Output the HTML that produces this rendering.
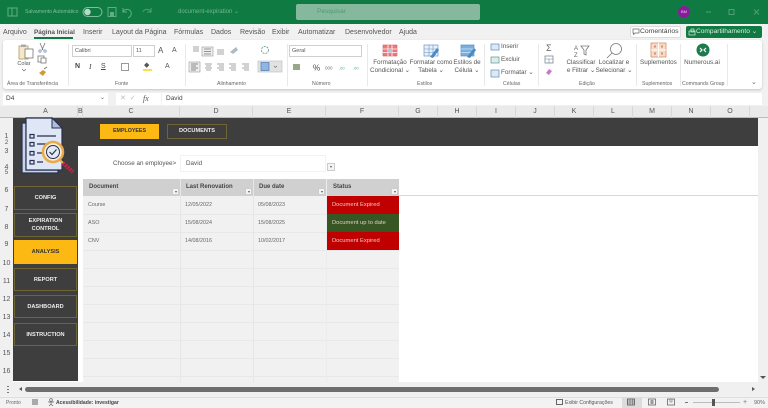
<!DOCTYPE html>
<html><head><meta charset="utf-8">
<style>
html,body{margin:0;padding:0;width:768px;height:408px;overflow:hidden;background:#f1f1f1;font-family:"Liberation Sans",sans-serif;}
.a{position:absolute;white-space:nowrap;}
.t{position:absolute;white-space:nowrap;color:#555;font-size:6.3px;line-height:8px;}
.c{text-align:center;}
.tab{position:absolute;top:28px;font-size:7px;line-height:9px;color:#555;white-space:nowrap;}
.gl{position:absolute;top:81px;font-size:5.2px;line-height:7px;color:#666;white-space:nowrap;}
.sep{position:absolute;top:44px;width:1px;height:42px;background:#e8e8e8;}
.box{position:absolute;background:#fff;border:1px solid #cfcfcf;box-sizing:border-box;}
.ch{position:absolute;top:106px;height:12px;font-size:7px;line-height:12px;text-align:center;color:#555;border-right:1px solid #d8d8d8;box-sizing:border-box;}
.rh{position:absolute;left:0;width:13px;text-align:center;font-size:7px;color:#555;line-height:8px;box-sizing:border-box;}
.nav{position:absolute;left:14px;width:63px;background:#3e3e3e;border:1px solid #6e6434;box-sizing:border-box;color:#eee;font-size:5.6px;font-weight:bold;text-align:center;display:flex;align-items:center;justify-content:center;line-height:8px;}
.hd{position:absolute;top:179px;height:17px;background:#d0d0d0;color:#444;font-size:6px;font-weight:bold;line-height:17px;padding-left:6px;box-sizing:border-box;}
.fb{position:absolute;top:188px;width:7px;height:7px;background:#f4f4f4;border:1px solid #ccc;box-sizing:border-box;}
.fb:after{content:"";position:absolute;left:1.5px;top:2px;border-left:1.5px solid transparent;border-right:1.5px solid transparent;border-top:2px solid #555;}
.cell{position:absolute;font-size:5.4px;color:#666;line-height:18px;}
.st{position:absolute;left:327px;width:72px;height:18px;font-size:5.8px;line-height:18px;color:#e0cdc5;padding-left:5px;box-sizing:border-box;}
</style></head>
<body>
<!-- title bar -->
<div class="a" style="left:0;top:0;width:768px;height:24px;background:#107a43;"></div>
<svg class="a" style="left:0;top:0" width="768" height="24">
<rect x="8" y="8" width="9" height="8" fill="none" stroke="#5fae86" stroke-width="1"/><line x1="12" y1="8" x2="12" y2="16" stroke="#5fae86"/>
<rect x="83" y="7.5" width="19" height="9" rx="4.5" fill="none" stroke="#7fbf9e"/><circle cx="87.500" cy="12" r="3.2" fill="#b8dbc9"/>
<rect x="108" y="7.500" width="8" height="9" fill="none" stroke="#5fae86"/><rect x="110" y="12" width="4" height="4" fill="#5fae86"/>
<path d="M123 12c2-4 7-3 8 0s-1 5-3 6M123 8v4h4" fill="none" stroke="#5fae86"/><path d="M151 12c-2-4-7-3-8 0M151 8v4h-4" fill="none" stroke="#4f9f78"/>
<circle cx="307" cy="11" r="2.200" fill="none" stroke="#4f9a75"/><path d="M305.500 12.500l-2 2.500" stroke="#4f9a75"/>
<circle cx="684" cy="12" r="6" fill="#8a1c9c"/>
<line x1="706" y1="12" x2="711" y2="12" stroke="#4f9f78"/><rect x="729" y="9.500" width="5" height="5" fill="none" stroke="#4f9f78"/>
<path d="M754 9.500l5 5M759 9.500l-5 5" stroke="#4f9f78"/>
</svg>
<div class="a" style="left:25px;top:8px;font-size:5.1px;line-height:8px;color:#7fbf9e;">Salvamento Automático</div>
<div class="a" style="left:178px;top:8px;font-size:6px;line-height:8px;color:#6fb792;">document-expiration ⌄</div>
<div class="a" style="left:296px;top:4px;width:184px;height:16px;background:#85b89c;border-radius:2px;"></div>
<div class="a" style="left:317px;top:8px;font-size:6.5px;line-height:8px;color:#4f9a75;">Pesquisar</div>
<div class="a" style="left:679px;top:9px;width:10px;font-size:4px;line-height:6px;text-align:center;color:#e8c8ee;">BM</div>
<!-- tabs -->
<div class="tab" style="left:3px">Arquivo</div>
<div class="tab" style="left:34px;font-weight:bold;font-size:6.4px">Página Inicial</div>
<div class="a" style="left:34px;top:37px;width:39px;height:1.500px;background:#107a43;"></div>
<div class="tab" style="left:83px">Inserir</div>
<div class="tab" style="left:112px">Layout da Página</div>
<div class="tab" style="left:174px">Fórmulas</div>
<div class="tab" style="left:211px">Dados</div>
<div class="tab" style="left:240px">Revisão</div>
<div class="tab" style="left:272px">Exibir</div>
<div class="tab" style="left:298px">Automatizar</div>
<div class="tab" style="left:345px">Desenvolvedor</div>
<div class="tab" style="left:399px">Ajuda</div>
<div class="a" style="left:630px;top:26px;width:51px;height:12px;background:#fff;border:1px solid #dcdcdc;box-sizing:border-box;border-radius:2px;font-size:6.8px;line-height:10px;color:#444;padding-left:9px;">Comentários</div>
<svg class="a" style="left:632px;top:28px" width="8" height="8"><path d="M1 1h6v4H3L1.500 6.500V5H1z" fill="none" stroke="#666" stroke-width=".7"/></svg>
<div class="a" style="left:686px;top:26px;width:76px;height:12px;background:#107a43;border-radius:2px;font-size:6.6px;line-height:12px;color:#d8eee2;padding-left:10px;box-sizing:border-box;">Compartilhamento ⌄</div>
<svg class="a" style="left:688px;top:28px" width="8" height="8"><rect x="1" y="3" width="6" height="4" fill="none" stroke="#d8eee2" stroke-width=".7"/><rect x="3" y="1" width="3" height="3" fill="none" stroke="#d8eee2" stroke-width=".7"/></svg>
<!-- ribbon -->
<div class="a" style="left:3px;top:40px;width:759px;height:49px;background:#fff;border-radius:3px;box-shadow:0 1px 2px #c4c4c4;"></div>
<div class="sep" style="left:68px"></div><div class="sep" style="left:185px"></div><div class="sep" style="left:287px"></div><div class="sep" style="left:367px"></div><div class="sep" style="left:484px"></div><div class="sep" style="left:538px"></div><div class="sep" style="left:636px"></div><div class="sep" style="left:680px"></div><div class="sep" style="left:727px"></div>
<svg class="a" style="left:0;top:40px" width="768" height="42">
<!-- clipboard -->
<rect x="19" y="6" width="9" height="13" fill="#f5e8c8" stroke="#b09a68" stroke-width=".8"/><rect x="25" y="9" width="8" height="9" fill="#fff" stroke="#777" stroke-width=".8"/><rect x="21" y="4.500" width="5" height="2.500" fill="#aaa"/>
<path d="M40 3l3 7M45 3l-3 7" stroke="#777" stroke-width=".8" fill="none"/><circle cx="40" cy="11" r="1.200" fill="none" stroke="#5b7fc0" stroke-width=".7"/><circle cx="45" cy="11" r="1.200" fill="none" stroke="#5b7fc0" stroke-width=".7"/>
<rect x="38" y="16" width="6" height="6" fill="#fff" stroke="#777" stroke-width=".8"/><rect x="41" y="18" width="5" height="5" fill="#fff" stroke="#777" stroke-width=".8"/>
<path d="M39 33l4-3 3 2-3 4z" fill="#d49a30"/><path d="M44 29l3-2" stroke="#777"/>
<path d="M22 26l2 2 2-2" fill="none" stroke="#666" stroke-width=".6" transform="translate(0 3)"/>
<!-- align icons -->
<path d="M193 7h6M193 9h6M193 11h6" stroke="#888" stroke-width=".7"/><rect x="202" y="7" width="11" height="9" fill="#eee" stroke="#999" stroke-width=".6"/><path d="M204 9h7M204 11.500h7M204 14h7" stroke="#777" stroke-width=".7"/><path d="M217 10h7M217 12h7M217 14h7" stroke="#888" stroke-width=".7"/>
<path d="M230 12l6-5 2 3-5 4z" fill="#9ab" opacity=".8"/>
<rect x="189" y="22" width="11" height="10" fill="#eee" stroke="#999" stroke-width=".6"/><path d="M191 24h7M191 26h5M191 28h7M191 30h5" stroke="#666" stroke-width=".7"/>
<path d="M205 24h7M206 26h5M205 28h7M206 30h5M217 24h7M219 26h5M217 28h7M219 30h5M229 24h7M231 26h5M229 28h7M231 30h5M242 24h7M244 26h5M242 28h7M244 30h5" stroke="#888" stroke-width=".7"/>
<circle cx="265" cy="10" r="3.500" fill="none" stroke="#7a9" stroke-width="1" stroke-dasharray="2 1"/>
<rect x="258" y="21" width="24" height="11" fill="#e2e2e2" stroke="#bbb" stroke-width=".6"/><rect x="261" y="22.500" width="8" height="8" fill="#8fb6e0" stroke="#4a7ab5" stroke-width=".7"/>
<path d="M274 26l1.500 1.500 1.500-1.500" fill="none" stroke="#666" stroke-width=".6"/>
<!-- number -->
<rect x="293" y="24" width="7" height="6" fill="#9aa88a"/><text x="313" y="30.500" font-size="8" fill="#444" font-family="Liberation Sans">%</text><text x="325" y="29.500" font-size="4.500" fill="#777" font-family="Liberation Sans">000</text><text x="339" y="29.500" font-size="4" fill="#5a7" font-family="Liberation Sans">,00</text><text x="353" y="29.500" font-size="4" fill="#5a7" font-family="Liberation Sans">,00</text>
<!-- cond format -->
<rect x="383" y="5" width="14" height="11" fill="#e77" stroke="#c66" stroke-width=".6"/><path d="M383 9h14M383 12.500h14M388 5v11M392 5v11" stroke="#fff" stroke-width=".8"/><rect x="388" y="9" width="4" height="3.500" fill="#aac8e8"/>
<rect x="424" y="5" width="14" height="11" fill="#e8f0f8" stroke="#6a97c8" stroke-width=".7"/><path d="M424 9h14M424 12.500h14M429 5v11M433 5v11" stroke="#6a97c8" stroke-width=".6"/><path d="M430 17l7-9 2 2-6 8z" fill="#4a8ac0"/>
<rect x="461" y="5" width="13" height="11" fill="#7ab0e0" stroke="#5a90c0" stroke-width=".7"/><path d="M461 9h13M461 12.500h13" stroke="#fff" stroke-width=".6"/><path d="M467 17l7-9 2 2-6 8z" fill="#4a8ac0"/>
<!-- cells -->
<rect x="491" y="4" width="8" height="6" fill="#dfe9f4" stroke="#5a8abc" stroke-width=".7"/><rect x="491" y="17" width="8" height="6" fill="#dfe9f4" stroke="#5a9a7c" stroke-width=".7"/><rect x="491" y="30" width="8" height="7" fill="#dfe9f4" stroke="#5a8abc" stroke-width=".7"/>
<!-- edit -->
<text x="546" y="11" font-size="9" fill="#666" font-family="Liberation Sans">Σ</text><rect x="545" y="16" width="8" height="7" fill="#fff" stroke="#777" stroke-width=".7"/><path d="M545 19h8M549 19v4" stroke="#5a8abc" stroke-width=".6"/><path d="M546 33l3-4 3 2-3 4z" fill="#c77bc7"/>
<text x="574" y="10" font-size="6" fill="#666" font-family="Liberation Sans">A</text><text x="574" y="17" font-size="6" fill="#666" font-family="Liberation Sans">Z</text><path d="M581 6h8l-3 4v5l-2-1v-4z" fill="none" stroke="#777" stroke-width=".8"/>
<circle cx="616" cy="9" r="5.500" fill="none" stroke="#777" stroke-width=".8"/><path d="M612 13l-5 5" stroke="#777" stroke-width=".8"/>
<!-- add-ins -->
<rect x="651" y="3" width="15" height="14" fill="#f6dcc8" stroke="#d8916a" stroke-width=".8"/><path d="M651 10h15M658.500 3v14" stroke="#fff" stroke-width="1"/><rect x="654" y="5.500" width="2" height="2" fill="#d8916a"/><rect x="661" y="5.500" width="2" height="2" fill="#d8916a"/><rect x="654" y="12.500" width="2" height="2" fill="#d8916a"/><rect x="661" y="12.500" width="2" height="2" fill="#d8916a"/>
<circle cx="703" cy="10" r="6.500" fill="#1e7b4e"/><path d="M700 8l2 2-2 2M706 8l-2 2 2 2" stroke="#fff" stroke-width="1.200" fill="none"/>
</svg>
<div class="t c" style="left:15px;top:60px;width:18px;font-size:5.5px;">Colar</div>
<div class="gl" style="left:7px">Área de Transferência</div>
<div class="gl" style="left:115px">Fonte</div>
<div class="gl" style="left:217px">Alinhamento</div>
<div class="gl" style="left:312px">Número</div>
<div class="gl" style="left:417px">Estilos</div>
<div class="gl" style="left:503px">Células</div>
<div class="gl" style="left:579px">Edição</div>
<div class="gl" style="left:642px">Suplementos</div>
<div class="gl" style="left:682px">Commands Group</div>
<div class="box" style="left:72px;top:45px;width:60px;height:12px;font-size:5.5px;line-height:10px;padding-left:2px;color:#555;">Calibri</div>
<div class="box" style="left:133px;top:45px;width:22px;height:12px;font-size:5.500px;line-height:10px;padding-left:2px;color:#555;">11</div>
<div class="a" style="left:158px;top:46px;font-size:8px;line-height:9px;color:#555;">A</div>
<div class="a" style="left:172px;top:47px;font-size:7px;line-height:8px;color:#555;">A</div>
<div class="a" style="left:75px;top:62px;font-size:7px;line-height:9px;color:#444;font-weight:bold;">N</div>
<div class="a" style="left:89px;top:62px;font-size:7.500px;line-height:9px;color:#444;font-style:italic;font-family:'Liberation Serif',serif;">I</div>
<div class="a" style="left:101px;top:62px;font-size:7px;line-height:9px;color:#444;text-decoration:underline;">S</div>
<div class="a" style="left:121px;top:63px;width:8px;height:8px;border:1px solid #999;box-sizing:border-box;"></div>
<div class="a" style="left:144px;top:62px;font-size:7px;line-height:7px;color:#555;">◆</div>
<div class="a" style="left:143px;top:69px;width:9px;height:2px;background:#f7e24a;"></div>
<div class="a" style="left:165px;top:62px;font-size:7px;line-height:9px;color:#555;">A</div>
<div class="box" style="left:289px;top:45px;width:73px;height:12px;font-size:5.5px;line-height:10px;padding-left:2px;color:#555;">Geral</div>
<div class="t c" style="left:368px;top:59px;width:44px;">Formatação<br>Condicional ⌄</div>
<div class="t c" style="left:409px;top:59px;width:44px;">Formatar como<br>Tabela ⌄</div>
<div class="t c" style="left:450px;top:59px;width:34px;">Estilos de<br>Célula ⌄</div>
<div class="t" style="left:501px;top:43px;">Inserir</div>
<div class="t" style="left:501px;top:56px;">Excluir</div>
<div class="t" style="left:501px;top:69px;">Formatar ⌄</div>
<div class="t c" style="left:560px;top:59px;width:42px;">Classificar<br>e Filtrar ⌄</div>
<div class="t c" style="left:593px;top:59px;width:42px;">Localizar e<br>Selecionar ⌄</div>
<div class="t c" style="left:640px;top:59px;width:36px;">Suplementos</div>
<div class="t c" style="left:680px;top:59px;width:44px;">Numerous.ai</div>
<div class="a" style="left:751px;top:79px;font-size:7px;line-height:8px;color:#666;">⌄</div>
<!-- formula bar -->
<div class="a" style="left:3px;top:93px;width:105px;height:12px;background:#fff;"></div>
<div class="a" style="left:6px;top:94px;font-size:6.500px;line-height:10px;color:#444;">D4</div>
<div class="a" style="left:100px;top:94px;font-size:6px;line-height:9px;color:#666;">⌄</div>
<div class="a" style="left:116px;top:93px;width:45px;height:12px;background:#fff;"></div>
<div class="a" style="left:120px;top:94px;font-size:7px;line-height:10px;color:#bbb;">✕ &nbsp;✓</div>
<div class="a" style="left:143px;top:93px;font-size:8px;line-height:11px;color:#555;font-style:italic;font-family:'Liberation Serif',serif;">fx</div>
<div class="a" style="left:162px;top:93px;width:600px;height:12px;background:#fff;font-size:6.500px;line-height:12px;color:#444;padding-left:4px;box-sizing:border-box;">David</div>
<!-- col headers -->
<div class="a" style="left:0;top:106px;width:768px;height:12px;background:#eaeaea;border-bottom:1px solid #bbb;box-sizing:border-box;"></div>
<div class="ch" style="left:14px;width:64px">A</div>
<div class="ch" style="left:78px;width:5px;overflow:visible">B</div>
<div class="ch" style="left:83px;width:97px">C</div>
<div class="ch" style="left:180px;width:73px">D</div>
<div class="ch" style="left:253px;width:73px">E</div>
<div class="ch" style="left:326px;width:73px">F</div>
<div class="ch" style="left:399px;width:39px">G</div>
<div class="ch" style="left:438px;width:39px">H</div>
<div class="ch" style="left:477px;width:39px">I</div>
<div class="ch" style="left:516px;width:39px">J</div>
<div class="ch" style="left:555px;width:39px">K</div>
<div class="ch" style="left:594px;width:39px">L</div>
<div class="ch" style="left:633px;width:39px">M</div>
<div class="ch" style="left:672px;width:39px">N</div>
<div class="ch" style="left:711px;width:39px">O</div>
<!-- sheet -->
<div class="a" style="left:0;top:118px;width:13px;height:264px;background:#f0f0f0;"></div>
<div class="a" style="left:13px;top:118px;width:745px;height:264px;background:#fff;"></div>
<div class="a" style="left:13px;top:118px;width:745px;height:28px;background:#3e3e3e;"></div>
<div class="a" style="left:13px;top:118px;width:65px;height:263px;background:#3e3e3e;"></div>
<div class="rh" style="top:133px">1</div><div class="rh" style="top:139px;font-size:6px">2</div><div class="rh" style="top:148px">3</div>
<div class="rh" style="top:164px">4</div><div class="rh" style="top:169px;font-size:6px">5</div><div class="rh" style="top:187px">6</div>
<div class="rh" style="top:206px">7</div><div class="rh" style="top:224px">8</div><div class="rh" style="top:241px">9</div>
<div class="rh" style="top:260px">10</div><div class="rh" style="top:278px">11</div><div class="rh" style="top:296px">12</div>
<div class="rh" style="top:314px">13</div><div class="rh" style="top:332px">14</div><div class="rh" style="top:350px">15</div><div class="rh" style="top:368px">16</div>
<!-- logo -->
<svg class="a" style="left:14px;top:113px" width="70" height="66">
<path d="M8 10h4v47h32v3H8z" fill="#c9d3ea" stroke="#27314f" stroke-width="1.200"/>
<path d="M12 5h26l10 10v42H12z" fill="#dfe6f5" stroke="#27314f" stroke-width="1.200"/>
<path d="M38 5l10 10H38z" fill="#aebce0" stroke="#27314f"/>
<g fill="none" stroke="#27314f" stroke-width="1.200">
<rect x="16" y="21.500" width="4" height="3.500"/><rect x="16" y="29.500" width="4" height="3.500"/><rect x="16" y="38.500" width="4" height="3.500"/><rect x="16" y="47.500" width="4" height="3.500"/>
<path d="M23 23h19M23 31h16M23 40h5M23 49h6"/></g>
<path d="M46 47l3 3" stroke="#f0b040" stroke-width="2"/>
<path d="M49 50l10 9" stroke="#b8284a" stroke-width="4" stroke-dasharray="2 1"/>
<circle cx="39" cy="39" r="10" fill="#f8eedd" stroke="#e9ab4a" stroke-width="2.500"/>
<circle cx="39" cy="39" r="6.500" fill="#e4ebf6" stroke="#27314f" stroke-width="1"/>
<path d="M35.500 39l2.500 2.500 4.500-5" fill="none" stroke="#27314f" stroke-width="1.200"/>
</svg>
<!-- top buttons -->
<div class="a" style="left:100px;top:124px;width:59px;height:15px;background:#fdb913;color:#333;font-size:5.300px;font-weight:bold;line-height:15px;text-align:center;">EMPLOYEES</div>
<div class="a" style="left:167px;top:124px;width:60px;height:15px;border:1px solid #6e6434;box-sizing:border-box;color:#eee;font-size:5.600px;font-weight:bold;line-height:13px;text-align:center;">DOCUMENTS</div>
<!-- nav -->
<div class="nav" style="top:186px;height:24px;">CONFIG</div>
<div class="nav" style="top:213px;height:24px;">EXPIRATION<br>CONTROL</div>
<div class="nav" style="top:240px;height:24px;background:#fdb913;color:#333;border:none;">ANALYSIS</div>
<div class="nav" style="top:268px;height:23px;">REPORT</div>
<div class="nav" style="top:295px;height:23px;">DASHBOARD</div>
<div class="nav" style="top:323px;height:23px;">INSTRUCTION</div>
<!-- employee -->
<div class="a" style="left:113px;top:160px;font-size:6.300px;line-height:8px;color:#555;">Choose an employee&gt;</div>
<div class="a" style="left:180px;top:155px;width:146px;height:17px;border:1px solid #f2f2f2;box-sizing:border-box;font-size:6.300px;line-height:15px;color:#555;padding-left:5px;">David</div>
<div class="fb" style="left:327px;top:163px;width:8px;height:8px;"></div>
<!-- table -->
<div class="a" style="left:83px;top:196px;width:243px;height:186px;background:#f1f1f1;"></div>
<div class="a" style="left:326px;top:250px;width:73px;height:132px;background:#f1f1f1;"></div>
<div class="a" style="left:83px;top:195px;width:675px;height:1px;background:#d8d8d8;"></div>
<div class="hd" style="left:83px;width:97px">Document</div>
<div class="hd" style="left:180px;width:73px">Last Renovation</div>
<div class="hd" style="left:253px;width:73px">Due date</div>
<div class="hd" style="left:327px;width:72px">Status</div>
<div class="a" style="left:180px;top:179px;width:1px;height:203px;background:#e6e6e6;"></div>
<div class="a" style="left:253px;top:179px;width:1px;height:203px;background:#e6e6e6;"></div>
<div class="a" style="left:326px;top:179px;width:1px;height:203px;background:#ececec;"></div>
<div class="fb" style="left:172px"></div><div class="fb" style="left:245px"></div><div class="fb" style="left:318px"></div><div class="fb" style="left:391px"></div>
<div class="a" style="left:83px;top:214px;width:316px;height:1px;background:#e8e8e8;"></div>
<div class="a" style="left:83px;top:232px;width:316px;height:1px;background:#e8e8e8;"></div>
<div class="a" style="left:83px;top:250px;width:316px;height:1px;background:#e8e8e8;"></div>
<div class="a" style="left:83px;top:268px;width:316px;height:1px;background:#e8e8e8;"></div>
<div class="a" style="left:83px;top:286px;width:316px;height:1px;background:#e8e8e8;"></div>
<div class="a" style="left:83px;top:304px;width:316px;height:1px;background:#e8e8e8;"></div>
<div class="a" style="left:83px;top:322px;width:316px;height:1px;background:#e8e8e8;"></div>
<div class="a" style="left:83px;top:340px;width:316px;height:1px;background:#e8e8e8;"></div>
<div class="a" style="left:83px;top:358px;width:316px;height:1px;background:#e8e8e8;"></div>
<div class="a" style="left:83px;top:376px;width:316px;height:1px;background:#e8e8e8;"></div>
<div class="cell" style="left:88px;top:196px">Course</div><div class="cell" style="left:185px;top:196px">12/05/2022</div><div class="cell" style="left:258px;top:196px">05/08/2023</div>
<div class="cell" style="left:88px;top:214px">ASO</div><div class="cell" style="left:185px;top:214px">15/08/2024</div><div class="cell" style="left:258px;top:214px">15/08/2025</div>
<div class="cell" style="left:88px;top:232px">CNV</div><div class="cell" style="left:185px;top:232px">14/08/2016</div><div class="cell" style="left:258px;top:232px">10/02/2017</div>
<div class="st" style="top:196px;background:#c00000;">Document Expired</div>
<div class="st" style="top:214px;background:#375623;">Document up to date</div>
<div class="st" style="top:232px;background:#c00000;">Document Expired</div>
<!-- scrollbars -->
<div class="a" style="left:758px;top:118px;width:10px;height:264px;background:#f0f0f0;"></div>
<div class="a" style="left:760px;top:376px;border-left:3px solid transparent;border-right:3px solid transparent;border-top:3px solid #555;"></div>
<div class="a" style="left:0;top:382px;width:768px;height:14px;background:#f0f0f0;"></div>
<div class="a" style="left:25px;top:387px;width:694px;height:5px;background:#6e6e6e;border-radius:2.500px;"></div>
<div class="a" style="left:19px;top:387px;border-top:2.500px solid transparent;border-bottom:2.500px solid transparent;border-right:3px solid #555;"></div>
<div class="a" style="left:752px;top:387px;border-top:2.500px solid transparent;border-bottom:2.500px solid transparent;border-left:3px solid #555;"></div>
<div class="a" style="left:7px;top:386px;width:1.500px;height:7px;background:repeating-linear-gradient(#777 0 1px,transparent 1px 3px);"></div>
<!-- status bar -->
<div class="a" style="left:0;top:397px;width:768px;height:11px;background:#f2f2f2;border-top:1px solid #dedede;box-sizing:border-box;"></div>
<div class="a" style="left:6px;top:399px;font-size:5px;line-height:8px;color:#666;">Pronto</div>
<div class="a" style="left:32px;top:399px;width:6px;height:6px;background:#aaa;"></div>
<svg class="a" style="left:47px;top:398px" width="8" height="9"><circle cx="4" cy="2" r="1.400" fill="none" stroke="#666" stroke-width=".7"/><path d="M1 4h6M4 4v2M2 8l2-2 2 2" stroke="#666" stroke-width=".7" fill="none"/></svg>
<div class="a" style="left:56px;top:399px;font-size:5.100px;line-height:8px;color:#444;font-weight:bold;">Acessibilidade: investigar</div>
<div class="a" style="left:556px;top:399px;width:7px;height:6px;border:1px solid #666;box-sizing:border-box;"></div>
<div class="a" style="left:565px;top:399px;font-size:5.200px;line-height:8px;color:#555;">Exibir Configurações</div>
<div class="a" style="left:622px;top:397px;width:20px;height:11px;background:#dcdcdc;"></div>
<svg class="a" style="left:627px;top:398px" width="80" height="9">
<rect x=".5" y="1" width="7" height="6" fill="none" stroke="#555" stroke-width=".8"/><path d="M.5 3h7M.5 5h7M3 1v6M5.500 1v6" stroke="#555" stroke-width=".5"/>
<rect x="21.500" y="1" width="7" height="6" fill="none" stroke="#666" stroke-width=".8"/><rect x="23.500" y="2" width="3" height="4" fill="#999"/>
<rect x="40.500" y="1" width="7" height="6" fill="none" stroke="#666" stroke-width=".8"/><path d="M43 1v3h2V1" fill="none" stroke="#666" stroke-width=".6"/>
<path d="M58 4.500h3" stroke="#777"/>
</svg>
<div class="a" style="left:693px;top:402px;width:47px;height:1px;background:#bbb;"></div>
<div class="a" style="left:712px;top:399px;width:2.500px;height:7px;background:#555;"></div>
<div class="a" style="left:743px;top:398px;font-size:7px;line-height:9px;color:#777;">+</div>
<div class="a" style="left:754px;top:399px;font-size:5.500px;line-height:8px;color:#666;">90%</div>
</body></html>
